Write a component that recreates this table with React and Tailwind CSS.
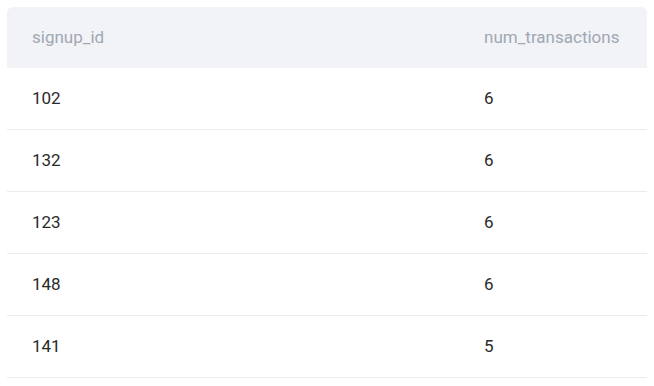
export default function App() {
  const rows = [
    ["102", "6"],
    ["132", "6"],
    ["123", "6"],
    ["148", "6"],
    ["141", "5"],
  ];
  return (
    <div className="w-[654px] h-[386px] bg-white pl-[7px] pt-[7px] overflow-hidden" style={{ fontFamily: "Roboto, sans-serif" }}>
      <div className="w-[640px]">
        <div className="flex h-[61px] items-center bg-[#f1f3f7] rounded-t-[6px] text-[17px] text-[#a0a7b4]">
          <div className="w-[477px] pl-[25px]">signup_id</div>
          <div className="flex-1">num_transactions</div>
        </div>
        {rows.map((r, i) => (
          <div key={i} className="flex h-[62px] items-center border-b border-[#e8ebf0] text-[17px] text-[#2a2a2a]">
            <div className="w-[477px] pl-[25px]">{r[0]}</div>
            <div className="flex-1">{r[1]}</div>
          </div>
        ))}
      </div>
    </div>
  );
}
